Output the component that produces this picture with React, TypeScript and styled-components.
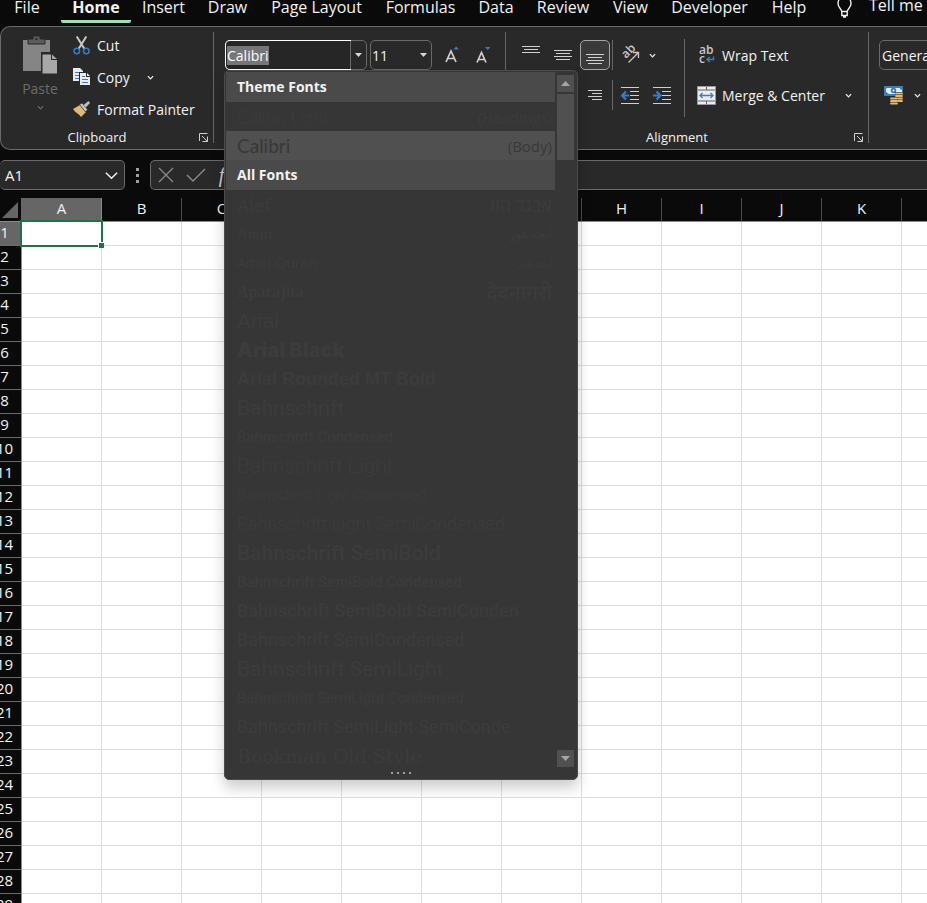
import React from "react";
import styled, { createGlobalStyle, css } from "styled-components";

const GlobalStyle = createGlobalStyle`
  *, *::before, *::after { box-sizing: border-box; }
  body { margin: 0; background: #0a0a0a; }
  button, input, select { font: inherit; color: inherit; }
`;

const Page = styled.main`
  display: flex;
  flex-direction: column;
  height: 100vh;
  overflow: hidden;
  background: #0a0a0a;
  color: #f2f2f2;
  font-family: "Open Sans", "Noto Sans", sans-serif;
  font-size: 14px;
`;

/* ---------- Tabs ---------- */

const TabBar = styled.nav`
  display: flex;
  flex: none;
  height: 26px;
`;

const Tab = styled.button<{ $width: number; $active?: boolean }>`
  flex: none;
  width: ${(p) => p.$width}px;
  height: 23px;
  padding: 0 0 6px;
  border: 0;
  border-bottom: 3px solid ${(p) => (p.$active ? "#a3dcb9" : "transparent")};
  border-radius: 2px;
  background: none;
  font-size: 16px;
  line-height: 14px;
  font-weight: ${(p) => (p.$active ? 700 : 400)};
  white-space: nowrap;
`;

const TellMe = styled.button`
  display: flex;
  flex: none;
  gap: 17px;
  height: 22px;
  margin-left: 18px;
  padding: 0;
  border: 0;
  background: none;
  font-size: 16px;
  line-height: 10px;
  white-space: nowrap;
`;

/* ---------- Ribbon ---------- */

const Ribbon = styled.section`
  display: flex;
  flex: none;
  height: 124px;
  border: 1px solid #6a6a6a;
  border-width: 1px 0 1px 1px;
  border-radius: 10px 0 0 10px;
  background: #292929;
`;

const Group = styled.div<{ $width: number }>`
  display: flex;
  flex-direction: column;
  flex: none;
  width: ${(p) => p.$width}px;
`;

const GroupBody = styled.div`
  display: flex;
  height: 98px;
`;

const GroupFooter = styled.div`
  display: grid;
  grid-template-columns: 1fr 20px;
  align-items: center;
  height: 24px;
  text-align: center;
  font-size: 13px;
`;

const Divider = styled.div`
  flex: none;
  width: 1px;
  margin: 5px 0 6px;
  background: #666;
`;

const InnerDivider = styled.div<{ $height: number; $top?: number }>`
  flex: none;
  width: 1px;
  height: ${(p) => p.$height}px;
  margin-top: ${(p) => p.$top ?? 0}px;
  background: #666;
`;

const bare = css`
  border: 0;
  padding: 0;
  background: none;
`;

const Launcher = styled.button`
  ${bare}
  display: flex;
  padding: 1px 0 0 5px;
`;

const PasteButton = styled.button`
  ${bare}
  display: flex;
  flex-direction: column;
  align-items: center;
  width: 60px;
  margin: 8px 3px 0 9px;
  color: #6b6b6b;
`;

const PasteLabel = styled.span`
  line-height: 20px;
  margin: 4px 0 5px;
`;

const CommandList = styled.div`
  display: flex;
  flex-direction: column;
  padding-top: 2px;
`;

const Command = styled.button<{ $height: number }>`
  ${bare}
  display: flex;
  align-items: center;
  gap: 6px;
  height: ${(p) => p.$height}px;
  white-space: nowrap;
`;

const CommandLabel = styled.span<{ $width?: number }>`
  min-width: ${(p) => p.$width ?? 0}px;
  text-align: left;
`;

const IconButton = styled.button<{ $width?: number; $active?: boolean }>`
  display: flex;
  align-items: center;
  justify-content: center;
  flex: none;
  width: ${(p) => p.$width ?? 30}px;
  height: 30px;
  padding: 0;
  border: 1px solid ${(p) => (p.$active ? "#a6a6a6" : "transparent")};
  border-radius: 5px;
  background: ${(p) => (p.$active ? "#3a3a3a" : "transparent")};
`;

const ButtonGrid = styled.div`
  display: flex;
  flex-direction: column;
  gap: 10px;
  padding: 13px 0 0;
`;

const ButtonRow = styled.div`
  display: flex;
  gap: 2px;
`;

const AlignButtons = styled(ButtonGrid)`
  margin: 0 0 0 10px;
`;

const IndentButtons = styled(ButtonGrid)`
  margin: 0 7px 0 2px;
`;

const TextButtons = styled(ButtonGrid)`
  margin-left: 12px;
`;

/* ---------- Font controls ---------- */

const FontRow = styled.div`
  position: relative;
  display: flex;
  align-items: center;
  gap: 3px;
  height: 30px;
  margin: 13px 0 0 11px;
`;

const Combo = styled.div<{ $width: number }>`
  display: flex;
  width: ${(p) => p.$width}px;
  height: 30px;
  border: 1px solid #6a6a6a;
  border-radius: 5px;
`;

const ComboInput = styled.input<{ $focused?: boolean }>`
  flex: 1;
  min-width: 0;
  padding: 0 2px 0 1px;
  border: 0;
  outline: 0;
  border-radius: 4px 0 0 4px;
  background: transparent;
  &::selection { background: #767676; color: #fff; }
  ${(p) => p.$focused && css`
    box-shadow: 0 0 0 1px #fff;
    background: #262626;
  `}
`;

const ComboArrow = styled.button<{ $split?: boolean }>`
  ${bare}
  display: flex;
  align-items: center;
  justify-content: center;
  width: 16px;
  border-left: 1px solid ${(p) => (p.$split ? "#6a6a6a" : "transparent")};
`;

const SizeButtons = styled.div`
  display: flex;
  padding-left: 2px;
`;

const Popup = styled.div`
  position: absolute;
  z-index: 5;
  top: 30px;
  left: -1px;
  width: 354px;
  border: 1px solid #4a4a4a;
  border-radius: 5px;
  background: #363636;
  box-shadow: 0 8px 14px rgba(0, 0, 0, 0.2);
`;

const PopupBody = styled.div`
  display: flex;
  gap: 2px;
  padding: 1px 3px 0 1px;
`;

const FontList = styled.div`
  flex: 1;
  min-width: 0;
`;

const ListHeading = styled.div`
  height: 30px;
  padding: 0 11px;
  background: #4a4a4a;
  font-weight: 700;
  line-height: 29px;
`;

const FontOption = styled.div<{ $selected?: boolean }>`
  display: flex;
  align-items: center;
  justify-content: space-between;
  height: 29px;
  padding: 0 3px 0 11px;
  background: ${(p) => (p.$selected ? "#505050" : "transparent")};
  color: ${(p) => (p.$selected ? "#383838" : "#3c3c3c")};
  white-space: nowrap;
`;

const FontName = styled.span<{ $family: string; $size: number; $weight: number }>`
  font-family: ${(p) => p.$family}, sans-serif;
  font-size: ${(p) => p.$size}px;
  font-weight: ${(p) => p.$weight};
  line-height: 28px;
`;

const FontSample = styled.span<{ $size: number }>`
  font-family: "Open Sans", "Noto Sans", "DejaVu Sans", sans-serif;
  font-size: ${(p) => p.$size}px;
  line-height: 28px;
`;

const ScrollTrack = styled.div`
  display: flex;
  flex-direction: column;
  width: 17px;
  padding: 3px 0;
`;

const ScrollButton = styled.button`
  ${bare}
  display: flex;
  align-items: center;
  justify-content: center;
  height: 17px;
  background: #505050;
`;

const ScrollThumb = styled.div`
  height: 66px;
  margin: 2px 0 auto;
  background: #505050;
`;

const Grip = styled.div`
  display: flex;
  justify-content: center;
  gap: 4px;
  height: 9px;
  padding-top: 2px;
`;

const GripDot = styled.i`
  width: 2px;
  height: 2px;
  background: #a0a0a0;
`;

const NumberSelect = styled.select`
  appearance: none;
  width: 150px;
  height: 30px;
  padding: 0 2px;
  border: 1px solid #6a6a6a;
  border-radius: 5px;
  background: #292929;
`;

const NumberControls = styled(ButtonGrid)`
  margin-left: 10px;
`;

const CurrencyButton = styled.button`
  ${bare}
  display: flex;
  align-items: center;
  gap: 10px;
  height: 30px;
  padding-left: 5px;
`;

/* ---------- Formula bar ---------- */

const FormulaRow = styled.div`
  display: flex;
  flex: none;
  height: 48px;
  padding: 10px 0 8px;
`;

const NameBox = styled.div`
  display: flex;
  align-items: center;
  width: 125px;
  padding-right: 5px;
  border: 1px solid #6a6a6a;
  border-left: 0;
  border-radius: 5px;
  background: #292929;
`;

const NameInput = styled.input`
  flex: 1;
  min-width: 0;
  padding: 0 5px;
  border: 0;
  outline: 0;
  background: transparent;
  font-size: 15px;
`;

const DotHandle = styled.div`
  display: flex;
  flex-direction: column;
  align-items: center;
  justify-content: center;
  gap: 3px;
  width: 25px;
`;

const HandleDot = styled.i`
  width: 3px;
  height: 3px;
  background: #a0a0a0;
`;

const FormulaBox = styled.div`
  display: flex;
  flex: 1;
  align-items: center;
  border: 1px solid #6a6a6a;
  border-right: 0;
  border-radius: 5px 0 0 5px;
  background: #292929;
`;

const FormulaButton = styled.button`
  ${bare}
  display: flex;
  align-items: center;
  justify-content: center;
  width: 30px;
  height: 28px;
  color: #8a8a8a;
`;

const FxButton = styled(FormulaButton)`
  color: #d0d0d0;
  font-family: "Liberation Serif", serif;
  font-style: italic;
  font-size: 20px;
`;

const FormulaInput = styled.input`
  flex: 1;
  min-width: 0;
  border: 0;
  outline: 0;
  background: transparent;
`;

/* ---------- Grid ---------- */

const SheetArea = styled.div`
  flex: 1;
  min-height: 0;
  overflow: hidden;
`;

const Sheet = styled.table`
  width: 2102px;
  table-layout: fixed;
  border-collapse: separate;
  border-spacing: 0;
  font-size: 15px;
`;

const CornerCell = styled.th`
  width: 22px;
  height: 24px;
  padding: 0;
  border-right: 1px solid #666;
  border-bottom: 1px solid #8a8a8a;
  vertical-align: middle;
`;

const CornerIcon = styled.svg`
  display: block;
  margin-left: 2px;
`;

const ColumnHeader = styled.th<{ $active?: boolean }>`
  width: 80px;
  height: 24px;
  padding: 0 0 2px;
  border-right: 1px solid ${(p) => (p.$active ? "#8a8a8a" : "#4c4c4c")};
  border-bottom: 1px solid #8a8a8a;
  background: ${(p) => (p.$active ? "#666" : "#0a0a0a")};
  font-weight: 400;
  line-height: 21px;
`;

const RowHeader = styled.th<{ $active?: boolean }>`
  height: 24px;
  padding: 0 0 2px;
  border-right: 1px solid #8a8a8a;
  border-bottom: 1px solid #6a6a6a;
  background: ${(p) => (p.$active ? "#666" : "#0a0a0a")};
  font-weight: 400;
  line-height: 21px;
`;

const RowNumber = styled.span`
  display: flex;
  justify-content: center;
  width: 9px;
`;

const Cell = styled.td<{ $active?: boolean }>`
  position: relative;
  z-index: ${(p) => (p.$active ? 1 : 0)};
  height: 24px;
  padding: 0;
  border-right: 1px solid #dedede;
  border-bottom: 1px solid #dedede;
  background: #fff;
`;

const Selection = styled.div`
  position: absolute;
  inset: -2px;
  border: 2px solid #1e7346;
  &::after {
    content: "";
    position: absolute;
    right: -3px;
    bottom: -3px;
    width: 6px;
    height: 6px;
    border: solid #fff;
    border-width: 1px 0 0 1px;
    background: #1e7346;
  }
`;

/* ---------- Icons ---------- */

const Chevron = ({ size = 7, stroke = 1.4 }: { size?: number; stroke?: number }) => (
  <svg width={size} height={size} viewBox="0 0 8 8" fill="none" stroke="currentColor" strokeWidth={stroke}>
    <path d="M1 2.5 4 5.5 7 2.5" />
  </svg>
);

const Triangle = ({ up, color = "#d8d8d8", width = 7 }: { up?: boolean; color?: string; width?: number }) => (
  <svg width={width} height={width === 7 ? 4 : 5} viewBox="0 0 8 4" preserveAspectRatio="none" fill={color}>
    <path d={up ? "M0 4 4 0 8 4Z" : "M0 0H8L4 4Z"} />
  </svg>
);

const BulbIcon = () => (
  <svg width="15" height="18" viewBox="0 0 15 18" fill="none" stroke="#f2f2f2" strokeWidth="1.4">
    <path d="M4.8 11.5C4.6 8.8 1 7.6 1 3.5 1-.7 4 -3 7.5 -3S14-.7 14 3.5c0 4.1-3.6 5.300-3.800 8ZM4.800 11.500v4h5.400v-4M6 17h3" />
  </svg>
);

const PasteIcon = () => (
  <svg width="36" height="40" viewBox="0 0 36 40">
    <path d="M1 5H28V36H1Z" fill="#858585" />
    <path d="M6 4h5V2.500Q11 1 12.500 1h4Q18 1 18 2.500V4h5v5H6Z" fill="#5c5c5c" stroke="#292929" strokeWidth="1" />
    <path d="M13.500 3h2v2h-2Z" fill="#292929" />
    <path d="M19 17h10l7 6v17H19Z" fill="#292929" />
    <path d="M20.500 19.500h8.500V25h6v13.500H20.500Z" fill="#a8a8a8" />
    <path d="M30 19.500 35 24H30Z" fill="#a8a8a8" />
  </svg>
);

const CutIcon = () => (
  <svg width="18" height="19" viewBox="0 0 18 19" fill="none">
    <path d="M3.700 .5 11.500 13M13.300 .5 5.500 13" stroke="#c8c8c8" strokeWidth="2" />
    <circle cx="3.800" cy="15" r="2.800" stroke="#3a7cc4" strokeWidth="1.500" />
    <circle cx="13.300" cy="15" r="2.800" stroke="#3a7cc4" strokeWidth="1.500" />
  </svg>
);

const CopyIcon = () => (
  <svg width="18" height="18" viewBox="0 0 18 18">
    <path d="M0 0H7L10 3V13H0Z" fill="#ececec" />
    <path d="M2 4.500H6M2 7.500H6M2 10.500H6" stroke="#3a7cc4" />
    <path d="M6 4H14L18 8V18H6Z" fill="#292929" />
    <path d="M7 5H13V9H17V17H7Z" fill="#ececec" />
    <path d="M14 5 17 8H14Z" fill="#ececec" />
    <path d="M9 8.500H12M9 11.500H15M9 14.500H15" stroke="#3a7cc4" />
  </svg>
);

const PainterIcon = () => (
  <svg width="18" height="18" viewBox="0 0 18 18">
    <path d="M0 9 7 5 13 12 8 17Q6 14 4.500 13.500Q2 12 0 9Z" fill="#e2b877" />
    <path d="M6.500 4.500 9 3 14.500 9.500 12.500 12Z" fill="#c8c8c8" stroke="#292929" strokeWidth=".7" />
    <path d="M10.500 5 15.500 1 17 3 12.800 7.500Z" fill="#bdbdbd" />
  </svg>
);

const LauncherIcon = () => (
  <svg width="11" height="11" viewBox="0 0 11 11" fill="none" stroke="#cfcfcf">
    <path d="M1.500 9V1.500H9.500M4 4 9 9M9.500 4.500V9.500H4.500" />
  </svg>
);

const LinesIcon = ({ rows, width = 18 }: { rows: [number, number, number][]; width?: number }) => (
  <svg width={width} height="20" viewBox={`0 0 ${width} 20`} stroke="#d0d0d0">
    {rows.map(([x1, x2, y]) => (
      <path key={y} d={`M${x1} ${y}.5H${x2}`} />
    ))}
  </svg>
);

const GrowIcon = ({ shrink }: { shrink?: boolean }) => (
  <svg width="18" height="20" viewBox="0 0 18 20" fill="none">
    <path
      d={shrink ? "M2 17.500 6.500 7.500 11 17.500M3.500 14.500H9.500" : "M2 17 7 6 12 17M3.500 13.500H10.500"}
      stroke="#d0d0d0"
      strokeWidth="1.700"
    />
    <path d={shrink ? "M10 2H15.500L12.700 5Z" : "M9.500 4.500 12.200 1.500 15 4.500Z"} fill="#3a7cc4" />
  </svg>
);

const SvgText = styled.text`
  font-family: "Open Sans", sans-serif;
  font-size: 12px;
  font-weight: 600;
  fill: #c8c8c8;
`;

const OrientationIcon = () => (
  <svg width="20" height="20" viewBox="0 0 20 20" fill="none">
    <SvgText x="0" y="0" transform="translate(6 14) rotate(-45)">ab</SvgText>
    <path d="M8.500 17.500 18 8M13 7.500H18.500V13" stroke="#c8c8c8" strokeWidth="1.300" />
  </svg>
);

const IndentIcon = ({ right }: { right?: boolean }) => (
  <svg width="18" height="17" viewBox="0 0 18 17" fill="none">
    <path d="M0 .5H18M9 4.500H18M9 8.500H18M9 12.500H18M0 16.500H18" stroke="#d0d0d0" />
    <path
      d={right ? "M0 8.500H6.500M3.500 4.500 7.500 8.500 3.500 12.500" : "M8 8.500H1.500M5 4.500 1 8.500 5 12.500"}
      stroke="#3a7cc4"
      strokeWidth="2.200"
    />
  </svg>
);

const WrapIcon = () => (
  <svg width="19" height="20" viewBox="0 0 19 20" fill="none">
    <SvgText x="2" y="9">ab</SvgText>
    <SvgText x="2" y="18">c</SvgText>
    <path d="M16.500 11.500V14.500H10M12.800 12 10 14.500 12.800 17" stroke="#3a7cc4" strokeWidth="1.500" />
  </svg>
);

const MergeIcon = () => (
  <svg width="19" height="19" viewBox="0 0 19 19" fill="none">
    <path d="M.5 .5H18.500V18.500H.5Z" fill="#ececec" stroke="#9a9a9a" />
    <path d="M1 4H18M1 15H18M9.500 1V4M9.500 15V18" stroke="#5f5f5f" />
    <path d="M3 9.500H16M5.500 7 3 9.500 5.500 12M13.500 7 16 9.500 13.500 12" stroke="#3a7cc4" strokeWidth="1.300" />
  </svg>
);

const CurrencyIcon = () => (
  <svg width="20" height="20" viewBox="0 0 20 20">
    <path d="M0 1H19V11H0Z" fill="#3a7cc4" />
    <path d="M3 3H16V4L18 5V8L16 9H5L2 7V4Z" fill="#e6eef6" />
    <circle cx="9.500" cy="5.500" r="2.800" fill="#3a7cc4" />
    <circle cx="9.500" cy="5.500" r="1" fill="#e6eef6" />
    <path d="M10.500 7H20V18H13.500V11.500H5.500V20H14V18" fill="#292929" />
    <path d="M12 8.500H18M12 11H18M14.500 13.500H18M14.500 16H18M7 13.500H13M7 16H13M7 18.500H13" stroke="#e2b877" strokeWidth="1.800" strokeLinecap="round" />
  </svg>
);

const CrossIcon = () => (
  <svg width="16" height="16" viewBox="0 0 16 16" stroke="currentColor" strokeWidth="1.300">
    <path d="M1 1 15 15M15 1 1 15" />
  </svg>
);

const CheckIcon = () => (
  <svg width="20" height="14" viewBox="0 0 20 14" fill="none" stroke="currentColor" strokeWidth="1.400">
    <path d="M1 7 7 13 19 1" />
  </svg>
);

/* ---------- Data ---------- */

const tabs: { label: string; width: number; active?: boolean }[] = [
  { label: "File", width: 54 },
  { label: "Home", width: 70, active: true },
  { label: "Insert", width: 65 },
  { label: "Draw", width: 63 },
  { label: "Page Layout", width: 115 },
  { label: "Formulas", width: 93 },
  { label: "Data", width: 58 },
  { label: "Review", width: 76 },
  { label: "View", width: 59 },
  { label: "Developer", width: 99 },
  { label: "Help", width: 60 },
];

const TabStrip = styled(TabBar)`
  & > :first-child { margin-right: 7px; }
`;

interface FontEntry {
  name: string;
  family: string;
  size: number;
  weight?: number;
  sample?: string;
  sampleSize?: number;
}

const themeFonts: FontEntry[] = [
  { name: "Calibri Light", family: "Lato", size: 18, weight: 300, sample: "(Headings)", sampleSize: 15 },
  { name: "Calibri", family: "Lato", size: 19, sample: "(Body)", sampleSize: 15 },
];

const allFonts: FontEntry[] = [
  { name: "Alef", family: '"Open Sans"', size: 19, sample: "אבגד הוז", sampleSize: 18 },
  { name: "Amiri", family: '"Liberation Serif"', size: 15, sample: "أبجد هوز", sampleSize: 12 },
  { name: "Amiri Quran", family: '"Open Sans"', size: 14, sample: "أبجد هوز", sampleSize: 10 },
  { name: "Aparajita", family: '"Liberation Serif"', size: 16, weight: 700, sample: "देवनागरी", sampleSize: 21 },
  { name: "Arial", family: '"Liberation Sans"', size: 21 },
  { name: "Arial Black", family: "Inter", size: 20, weight: 900 },
  { name: "Arial Rounded MT Bold", family: '"Liberation Sans"', size: 18, weight: 700 },
  { name: "Bahnschrift", family: "Roboto", size: 21 },
  { name: "Bahnschrift Condensed", family: "Roboto", size: 15 },
  { name: "Bahnschrift Light", family: "Roboto", size: 21, weight: 300 },
  { name: "Bahnschrift Light Condensed", family: "Roboto", size: 15, weight: 300 },
  { name: "Bahnschrift Light SemiCondensed", family: "Roboto", size: 18, weight: 300 },
  { name: "Bahnschrift SemiBold", family: "Roboto", size: 21, weight: 500 },
  { name: "Bahnschrift SemiBold Condensed", family: "Roboto", size: 15, weight: 500 },
  { name: "Bahnschrift SemiBold SemiConden", family: "Roboto", size: 18, weight: 500 },
  { name: "Bahnschrift SemiCondensed", family: "Roboto", size: 18 },
  { name: "Bahnschrift SemiLight", family: "Roboto", size: 21 },
  { name: "Bahnschrift SemiLight Condensed", family: "Roboto", size: 15 },
  { name: "Bahnschrift SemiLight SemiConde", family: "Roboto", size: 18 },
  { name: "Bookman Old Style", family: '"DejaVu Serif"', size: 19 },
];

const columns = "ABCDEFGHIJKLMNOPQRSTUVWXYZ".split("");
const rowNumbers = Array.from({ length: 60 }, (_, i) => i + 1);

const renderFont = (font: FontEntry, selected = false) => (
  <FontOption key={font.name} role="option" aria-selected={selected} $selected={selected}>
    <FontName $family={font.family} $size={font.size} $weight={font.weight ?? 400}>{font.name}</FontName>
    {font.sample && <FontSample dir="auto" $size={font.sampleSize ?? 15}>{font.sample}</FontSample>}
  </FontOption>
);

const FontPopup = () => (
  <Popup>
    <PopupBody>
      <FontList role="listbox" aria-label="Fonts">
        <ListHeading>Theme Fonts</ListHeading>
        {themeFonts.map((f) => renderFont(f, f.name === "Calibri"))}
        <ListHeading>All Fonts</ListHeading>
        {allFonts.map((f) => renderFont(f))}
      </FontList>
      <ScrollTrack>
        <ScrollButton aria-label="Scroll up"><Triangle up color="#a6a6a6" width={9} /></ScrollButton>
        <ScrollThumb />
        <ScrollButton aria-label="Scroll down"><Triangle color="#a6a6a6" width={9} /></ScrollButton>
      </ScrollTrack>
    </PopupBody>
    <Grip><GripDot /><GripDot /><GripDot /><GripDot /></Grip>
  </Popup>
);

export default function App() {
  const fontInput = React.useRef<HTMLInputElement>(null);
  React.useEffect(() => {
    fontInput.current?.focus();
    fontInput.current?.select();
  }, []);

  return (
    <Page>
      <GlobalStyle />
      <TabStrip>
        {tabs.map((t) => (
          <Tab key={t.label} $width={t.width} $active={t.active}>{t.label}</Tab>
        ))}
        <TellMe><BulbIcon />Tell me</TellMe>
      </TabStrip>

      <Ribbon>
        <Group $width={212}>
          <GroupBody>
            <PasteButton disabled>
              <PasteIcon />
              <PasteLabel>Paste</PasteLabel>
              <Chevron />
            </PasteButton>
            <CommandList>
              <Command $height={32}><CutIcon /><CommandLabel>Cut</CommandLabel></Command>
              <Command $height={32}><CopyIcon /><CommandLabel $width={44}>Copy</CommandLabel><Chevron /></Command>
              <Command $height={32}><PainterIcon /><CommandLabel>Format Painter</CommandLabel></Command>
            </CommandList>
          </GroupBody>
          <GroupFooter>
            <span>Clipboard</span>
            <Launcher aria-label="Clipboard settings"><LauncherIcon /></Launcher>
          </GroupFooter>
        </Group>
        <Divider />

        <Group $width={291}>
          <FontRow>
            <Combo $width={142}>
              <ComboInput ref={fontInput} aria-label="Font" defaultValue="Calibri" $focused />
              <ComboArrow $split aria-label="Open font list"><Triangle /></ComboArrow>
            </Combo>
            <Combo $width={62}>
              <ComboInput aria-label="Font size" defaultValue="11" />
              <ComboArrow aria-label="Open size list"><Triangle /></ComboArrow>
            </Combo>
            <SizeButtons>
              <IconButton $width={32} aria-label="Increase font size"><GrowIcon /></IconButton>
              <IconButton aria-label="Decrease font size"><GrowIcon shrink /></IconButton>
            </SizeButtons>
            <FontPopup />
          </FontRow>
        </Group>
        <Divider />

        <Group $width={362}>
          <GroupBody>
            <AlignButtons>
              <ButtonRow>
                <IconButton aria-label="Top align"><LinesIcon rows={[[0, 18, 1], [2, 16, 4], [0, 18, 7]]} /></IconButton>
                <IconButton aria-label="Middle align"><LinesIcon rows={[[0, 18, 5], [2, 16, 8], [0, 18, 11], [2, 16, 14]]} /></IconButton>
                <IconButton aria-label="Bottom align" $active><LinesIcon rows={[[0, 18, 9], [2, 16, 12], [0, 18, 15], [2, 16, 18]]} /></IconButton>
                <InnerDivider $height={30} />
              </ButtonRow>
              <ButtonRow>
                <IconButton aria-label="Align left"><LinesIcon width={14} rows={[[0, 14, 5], [0, 10, 8], [0, 14, 11], [0, 10, 14]]} /></IconButton>
                <IconButton aria-label="Center"><LinesIcon width={14} rows={[[0, 14, 5], [2, 12, 8], [0, 14, 11], [2, 12, 14]]} /></IconButton>
                <IconButton aria-label="Align right"><LinesIcon width={14} rows={[[0, 14, 5], [4, 14, 8], [0, 14, 11], [4, 14, 14]]} /></IconButton>
                <InnerDivider $height={30} />
              </ButtonRow>
            </AlignButtons>
            <IndentButtons>
              <ButtonRow>
                <IconButton aria-label="Orientation"><OrientationIcon /></IconButton>
                <IconButton $width={11} aria-label="Orientation options"><Chevron /></IconButton>
              </ButtonRow>
              <ButtonRow>
                <IconButton aria-label="Decrease indent"><IndentIcon /></IconButton>
                <IconButton aria-label="Increase indent"><IndentIcon right /></IconButton>
              </ButtonRow>
            </IndentButtons>
            <InnerDivider $height={78} $top={12} />
            <TextButtons>
              <Command $height={30}><WrapIcon /><CommandLabel>Wrap Text</CommandLabel></Command>
              <Command $height={30}><MergeIcon /><CommandLabel $width={117}>Merge &amp; Center</CommandLabel><Chevron /></Command>
            </TextButtons>
          </GroupBody>
          <GroupFooter>
            <span>Alignment</span>
            <Launcher aria-label="Alignment settings"><LauncherIcon /></Launcher>
          </GroupFooter>
        </Group>
        <Divider />

        <Group $width={180}>
          <NumberControls>
            <NumberSelect aria-label="Number format"><option>General</option></NumberSelect>
            <CurrencyButton aria-label="Accounting format"><CurrencyIcon /><Chevron /></CurrencyButton>
          </NumberControls>
        </Group>
      </Ribbon>

      <FormulaRow>
        <NameBox>
          <NameInput aria-label="Name box" defaultValue="A1" />
          <Chevron size={15} stroke={0.8} />
        </NameBox>
        <DotHandle><HandleDot /><HandleDot /><HandleDot /></DotHandle>
        <FormulaBox>
          <FormulaButton aria-label="Cancel"><CrossIcon /></FormulaButton>
          <FormulaButton aria-label="Enter"><CheckIcon /></FormulaButton>
          <FxButton aria-label="Insert function">fx</FxButton>
          <FormulaInput aria-label="Formula" />
        </FormulaBox>
      </FormulaRow>

      <SheetArea>
        <Sheet>
          <thead>
            <tr>
              <CornerCell aria-label="Select all">
                <CornerIcon width="16" height="16" viewBox="0 0 16 16"><path d="M0 16 16 0V16Z" fill="#666" /></CornerIcon>
              </CornerCell>
              {columns.map((c) => (
                <ColumnHeader key={c} scope="col" $active={c === "A"}>{c}</ColumnHeader>
              ))}
            </tr>
          </thead>
          <tbody>
            {rowNumbers.map((n) => (
              <tr key={n}>
                <RowHeader scope="row" $active={n === 1}><RowNumber>{n}</RowNumber></RowHeader>
                {columns.map((c) => {
                  const active = n === 1 && c === "A";
                  return <Cell key={c} $active={active}>{active && <Selection />}</Cell>;
                })}
              </tr>
            ))}
          </tbody>
        </Sheet>
      </SheetArea>
    </Page>
  );
}
